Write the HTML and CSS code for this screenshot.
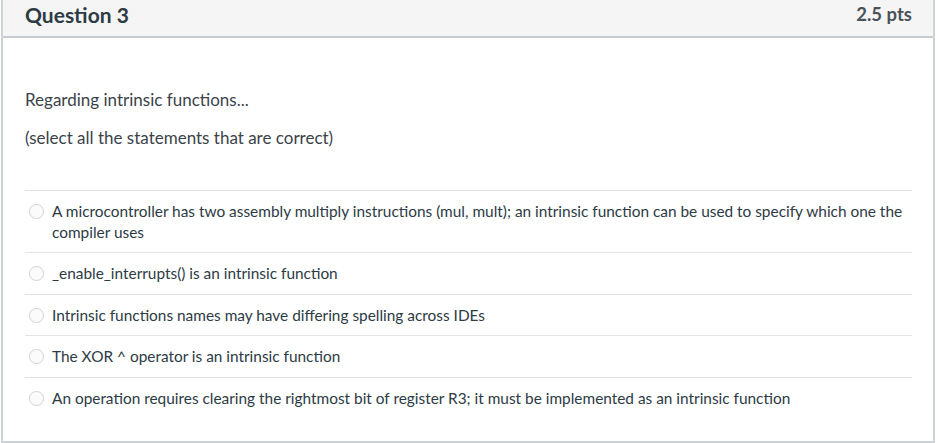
FILE: index.html
```html
<!DOCTYPE html>
<html>
<head>
<meta charset="utf-8">
<link rel="stylesheet" href="styles.css">
</head>
<body>
<div class="question">
  <div class="q-header">
    <span class="q-title">Question 3</span>
    <span class="q-points">2.5 pts</span>
  </div>
  <div class="q-body">
    <p class="q-text">Regarding intrinsic functions...</p>
    <p class="q-text">(select all the statements that are correct)</p>
    <div class="answers">
      <label class="answer"><span class="radio"></span><span class="a-text">A microcontroller has two assembly multiply instructions (mul, mult); an intrinsic function can be used to specify which one the compiler uses</span></label>
      <label class="answer"><span class="radio"></span><span class="a-text">_enable_interrupts() is an intrinsic function</span></label>
      <label class="answer"><span class="radio"></span><span class="a-text">Intrinsic functions names may have differing spelling across IDEs</span></label>
      <label class="answer"><span class="radio"></span><span class="a-text">The XOR ^ operator is an intrinsic function</span></label>
      <label class="answer"><span class="radio"></span><span class="a-text">An operation requires clearing the rightmost bit of register R3; it must be implemented as an intrinsic function</span></label>
    </div>
  </div>
</div>
</body>
</html>
```
FILE: styles.css
```css
html, body {
  margin: 0;
  padding: 0;
  background: #ffffff;
}
body {
  font-family: Lato, "Liberation Sans", sans-serif;
  color: #2d3b45;
  padding: 0 3px 0 1px;
  margin-top: -2px;
}
.question {
  border: 2px solid #cfd3d6;
}
.q-header {
  display: flex;
  justify-content: space-between;
  align-items: flex-start;
  background: #f5f5f5;
  border-bottom: 2px solid #c7cdd1;
  height: 36px;
  padding: 0 21px 0 22px;
}
.q-title {
  font-weight: 700;
  font-size: 21px;
  line-height: 25px;
  margin-top: 2px;
  color: #2d3b45;
}
.q-points {
  font-weight: 700;
  font-size: 18.5px;
  line-height: 22px;
  margin-top: 3px;
  color: #4a5359;
}
.q-body {
  padding: 51px 21px 23px 22px;
}
.q-text {
  margin: 0 0 16px 0;
  font-size: 17px;
  line-height: 22px;
  color: #3b4349;
}
.answers {
  margin-top: 41px;
  border-top: 1px solid #e1e4e6;
}
.answer {
  display: flex;
  align-items: flex-start;
  gap: 8px;
  padding: 10px 0 10px 4px;
  border-bottom: 1px solid #e1e4e6;
  font-size: 15.4px;
  line-height: 20.5px;
}
.answer:last-child {
  border-bottom: none;
}
.radio {
  flex: none;
  width: 13px;
  height: 13px;
  border: 1px solid #d3d7da;
  border-radius: 50%;
  margin-top: 3px;
  background: #fbfbfb;
  box-shadow: 0 0 1px rgba(0, 0, 0, 0.06);
}
.a-text {
  color: #2d3b45;
}
```
